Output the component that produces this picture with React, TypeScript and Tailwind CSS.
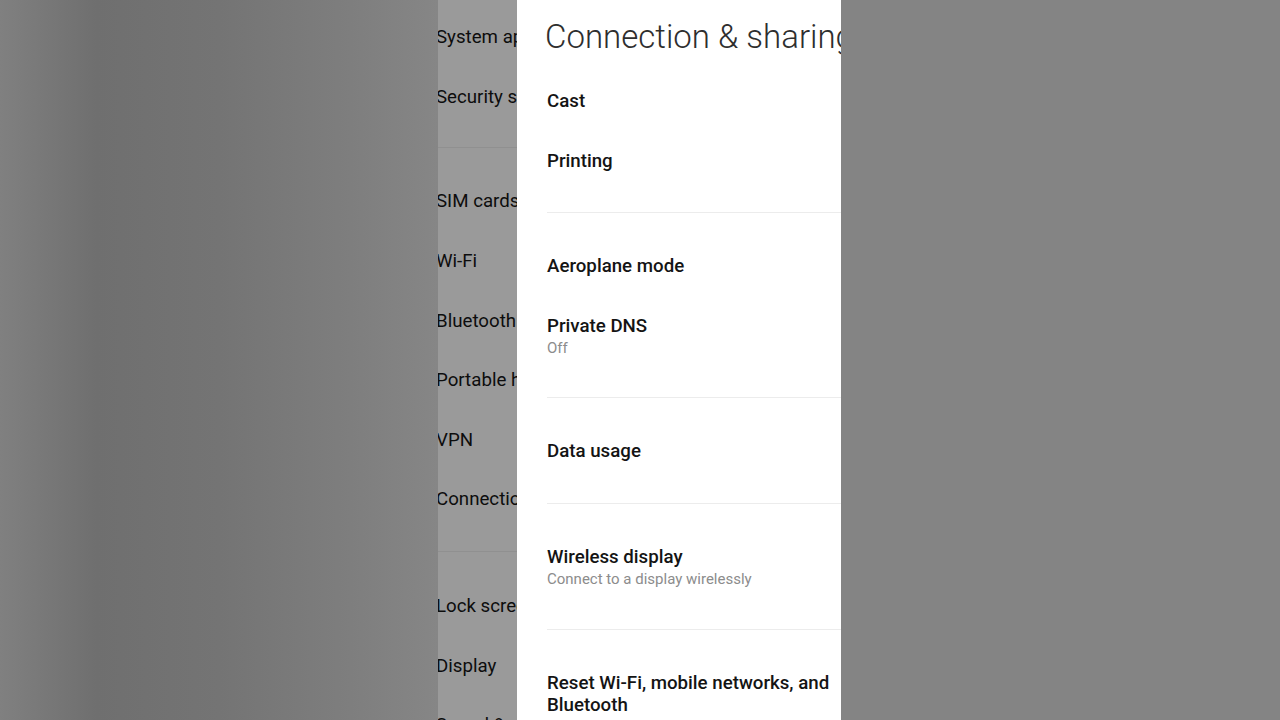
type Row = {
  title: string;
  subtitle?: string;
};

const sections: Row[][] = [
  [{ title: "Cast" }, { title: "Printing" }],
  [{ title: "Aeroplane mode" }, { title: "Private DNS", subtitle: "Off" }],
  [{ title: "Data usage" }],
  [{ title: "Wireless display", subtitle: "Connect to a display wirelessly" }],
  [{ title: "Reset Wi-Fi, mobile networks, and Bluetooth" }],
];

const behindGroups: string[][] = [
  ["Security s"],
  ["SIM cards", "Wi-Fi", "Bluetooth", "Portable h", "VPN", "Connection"],
  ["Lock screen", "Display", "Sound & vibration"],
];

function SettingRow({ row }: { row: Row }) {
  return (
    <div className={`pt-[19px] pr-[8px] ${row.subtitle ? "pb-[17px]" : "pb-[19px]"}`}>
      <p className="text-[18.7px] font-medium leading-[22px] text-[#141414]">{row.title}</p>
      {row.subtitle && (
        <p className="text-[15px] leading-[22px] text-[#8c8c8c]">{row.subtitle}</p>
      )}
    </div>
  );
}

export default function App() {
  return (
    <main
      className="flex h-[720px] w-[1280px] overflow-hidden"
      style={{ fontFamily: "Roboto, 'Noto Sans', sans-serif" }}
    >
      {/* blurred backdrop, left */}
      <div className="h-full w-[438px] bg-[linear-gradient(90deg,#808080_0%,#6f6f6f_22%,#747474_50%,#7e7e7e_80%,#868686_100%)]" />

      {/* previous settings screen, dimmed */}
      <div className="h-full w-[79px] overflow-hidden whitespace-nowrap bg-[#9a9a9a] pt-[1px] text-[18.7px] text-[#0d0d0d]">
        <div className="-ml-[2px] flex h-[66px] items-center pt-[6px]">System apps</div>
        {behindGroups.map((group, i) => (
          <div key={i}>
            {i > 0 && <div className="h-px bg-[#909090]" />}
            <div className={i === 0 ? "pb-[20px]" : "pt-[24px] pb-[22px]"}>
              {group.map((label) => (
                <div key={label} className="-ml-[2px] flex h-[59.6px] items-center">
                  {label}
                </div>
              ))}
            </div>
          </div>
        ))}
      </div>

      {/* connection & sharing */}
      <div className="h-full w-[324px] overflow-hidden bg-white">
        <h1 className="h-[70px] whitespace-nowrap pl-[28px] pt-[15px] text-[33px] font-light leading-[44px] text-[#2e2e2e]">
          Connection &amp; sharing
        </h1>
        {sections.map((rows, i) => (
          <div key={i}>
            {i > 0 && <div className="ml-[30px] h-px bg-[#ececec]" />}
            <div
              className={`pl-[30px] ${
                i === 0 ? "pt-px pb-[21px]" : i === 1 ? "pt-[23px] pb-[21px]" : "pt-[23px] pb-[22px]"
              }`}
            >
              {rows.map((row) => (
                <SettingRow key={row.title} row={row} />
              ))}
            </div>
          </div>
        ))}
      </div>

      {/* blurred backdrop, right */}
      <div className="h-full flex-1 bg-[#848484]" />
    </main>
  );
}
